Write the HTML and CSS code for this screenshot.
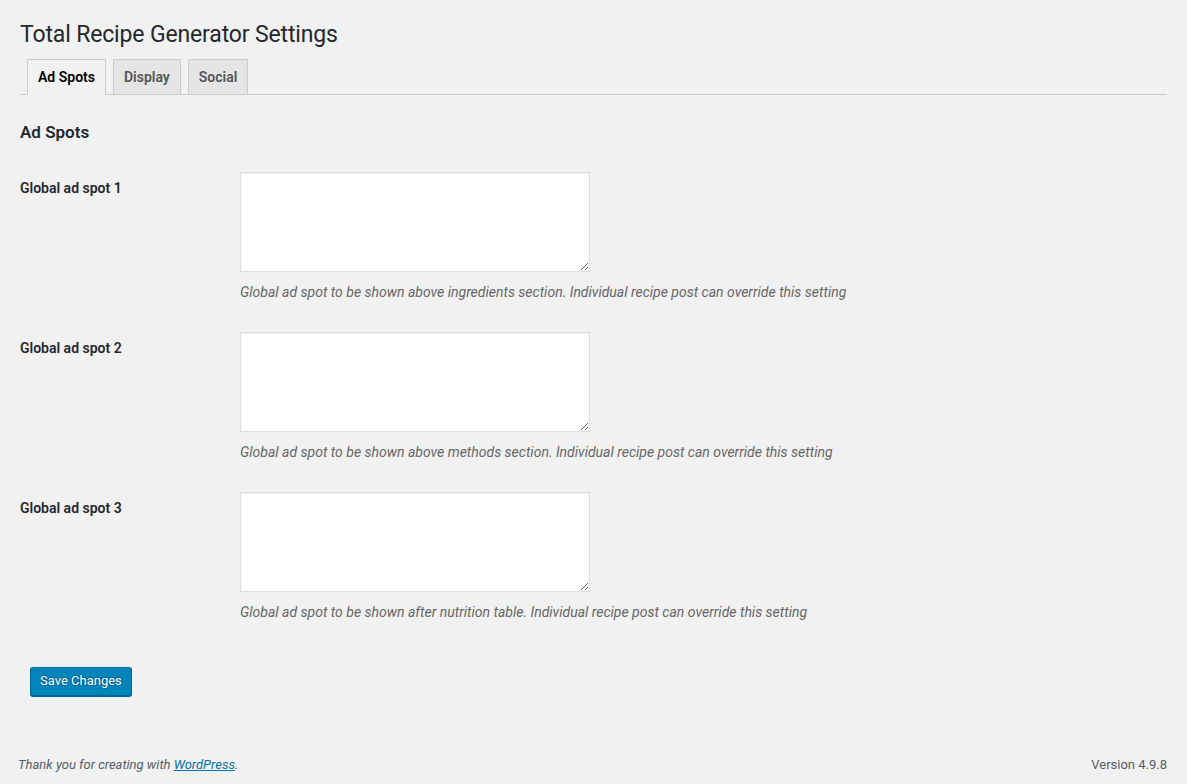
FILE: index.html
```html
<!DOCTYPE html>
<html lang="en">
<head>
<meta charset="utf-8">
<title>Total Recipe Generator Settings</title>
<link rel="stylesheet" href="styles.css">
</head>
<body>
<div class="wrap">
  <h1 class="page-title">Total Recipe Generator Settings</h1>
  <nav class="nav-tab-wrapper">
    <a class="nav-tab nav-tab-active" href="#">Ad Spots</a>
    <a class="nav-tab" href="#">Display</a>
    <a class="nav-tab" href="#">Social</a>
  </nav>
  <form class="settings-form">
    <h2 class="section-title">Ad Spots</h2>
    <div class="form-table">
      <div class="form-row">
        <label class="form-label" for="ad1">Global ad spot 1</label>
        <div class="form-field">
          <textarea id="ad1" class="ad-textarea"></textarea>
          <p class="description">Global ad spot to be shown above ingredients section. Individual recipe post can override this setting</p>
        </div>
      </div>
      <div class="form-row">
        <label class="form-label" for="ad2">Global ad spot 2</label>
        <div class="form-field">
          <textarea id="ad2" class="ad-textarea"></textarea>
          <p class="description">Global ad spot to be shown above methods section. Individual recipe post can override this setting</p>
        </div>
      </div>
      <div class="form-row">
        <label class="form-label" for="ad3">Global ad spot 3</label>
        <div class="form-field">
          <textarea id="ad3" class="ad-textarea"></textarea>
          <p class="description">Global ad spot to be shown after nutrition table. Individual recipe post can override this setting</p>
        </div>
      </div>
    </div>
    <p class="submit"><button type="button" class="button-primary">Save Changes</button></p>
  </form>
</div>
<footer class="wp-footer">
  <p class="footer-left">Thank you for creating with <a href="#">WordPress</a>.</p>
  <p class="footer-right">Version 4.9.8</p>
</footer>
</body>
</html>
```
FILE: styles.css
```css
* { box-sizing: border-box; }
html, body { height: 100%; }
body {
  margin: 0;
  background: #f1f1f1;
  color: #444;
  font-family: Roboto, "Noto Sans", "Liberation Sans", sans-serif;
  font-size: 13px;
  line-height: 1.4;
  display: flex;
  flex-direction: column;
  min-height: 100vh;
}
.wrap {
  padding: 0 20px;
}
.page-title {
  margin: 0;
  padding: 20px 0 0;
  font-size: 23px;
  font-weight: 400;
  line-height: 30px;
  color: #23282d;
  letter-spacing: -0.15px;
}
.nav-tab-wrapper {
  display: flex;
  align-items: flex-end;
  margin-top: 9px;
  border-bottom: 1px solid #ccc;
}
.nav-tab {
  display: block;
  margin-left: 7px;
  padding: 5px 10px;
  border: 1px solid #ccc;
  border-bottom: none;
  background: #e5e5e5;
  color: #555;
  font-size: 14px;
  font-weight: 600;
  line-height: 24px;
  text-decoration: none;
  white-space: nowrap;
}
.nav-tab-active {
  background: #f1f1f1;
  color: #000;
  border-bottom: 1px solid #f1f1f1;
  margin-bottom: -1px;
}
.section-title {
  margin: 26px 0 14px;
  font-size: 17px;
  font-weight: 600;
  line-height: 22px;
  color: #23282d;
}
.form-row {
  display: flex;
  align-items: flex-start;
}
.form-label {
  width: 210px;
  padding: 21px 10px 20px 0;
  font-size: 14px;
  font-weight: 600;
  line-height: 20px;
  color: #23282d;
  flex: none;
}
.form-field {
  padding: 15px 10px;
}
.ad-textarea {
  display: block;
  width: 350px;
  height: 100px;
  margin: 0;
  padding: 2px 6px;
  border: 1px solid #ddd;
  background: #fff;
  box-shadow: inset 0 1px 2px rgba(0,0,0,.07);
  font-family: inherit;
  font-size: 14px;
  color: #32373c;
  resize: both;
}
.description {
  margin: 10px 0 0;
  font-size: 14px;
  font-style: italic;
  line-height: 20px;
  color: #666;
}
.submit {
  margin: 0;
  padding: 30px 10px;
}
.button-primary {
  display: inline-block;
  height: 29px;
  margin: 0;
  padding: 0 9px 1px;
  border: 1px solid;
  border-color: #0073aa #006799 #006799;
  border-radius: 3px;
  background: #0085ba;
  box-shadow: 0 1px 0 #006799;
  color: #fff;
  font-family: inherit;
  font-size: 13px;
  line-height: 26px;
  text-shadow: 0 -1px 1px #006799, 1px 0 1px #006799, 0 1px 1px #006799, -1px 0 1px #006799;
  cursor: pointer;
}
.wp-footer {
  margin-top: auto;
  display: flex;
  justify-content: space-between;
  align-items: center;
  padding: 11px 20px 9px 18px;
  color: #555d66;
  font-size: 13px;
  line-height: 20px;
}
.wp-footer p { margin: 0; }
.footer-left { font-style: italic; }
.footer-left a { color: #0073aa; }
```
